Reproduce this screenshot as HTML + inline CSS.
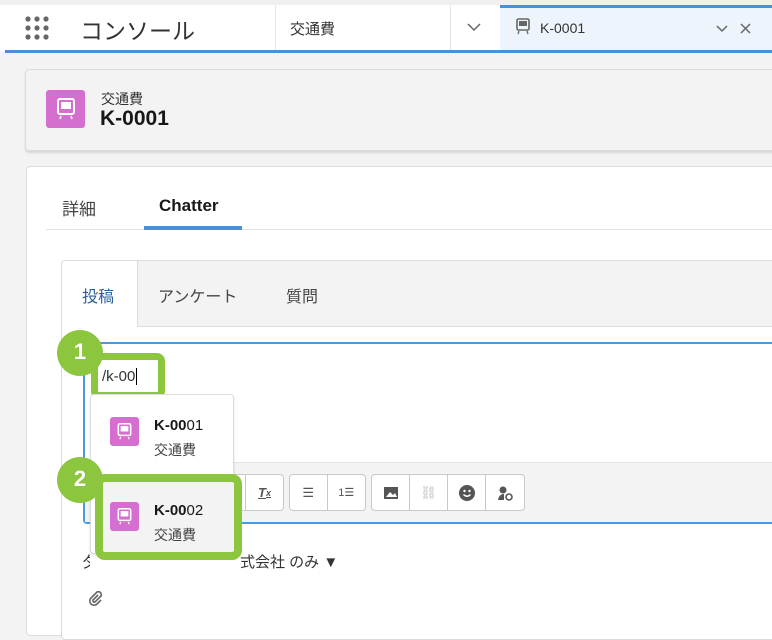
<!DOCTYPE html>
<html><head><meta charset="utf-8"><style>
*{margin:0;padding:0;box-sizing:border-box}
body{width:772px;height:627px;overflow:hidden;background:#f3f3f3;font-family:"Liberation Sans","Noto Sans CJK JP",sans-serif;position:relative;color:#181818}
.a{position:absolute}
.ic{background:#d56fcf;border-radius:3px}
.btn{position:absolute;top:474px;height:37px;border:1px solid #c9c9c9;background:#fff;border-radius:4px;display:flex}
.btn div{width:38px;height:35px;border-right:1px solid #c9c9c9;display:flex;align-items:center;justify-content:center;font-size:13px;color:#555}
.btn div:last-child{border-right:none}
</style></head><body>
<!-- top bar -->
<div class="a" style="left:0;top:0;width:772px;height:52px;background:#fff;border-top:5px solid #f0f0f0"></div>
<div class="a" style="left:500px;top:5px;width:272px;height:46px;background:#eef4fb;border-top:3px solid #4a90d9"></div>
<div class="a" style="left:5px;top:50px;width:767px;height:3px;background:#4a90d9"></div>
<div class="a" style="left:275px;top:5px;width:1px;height:45px;background:#e5e5e5"></div>
<div class="a" style="left:450px;top:5px;width:1px;height:45px;background:#e5e5e5"></div>
<svg class="a" style="left:24px;top:15px" width="26" height="26" viewBox="0 0 26 26" fill="#666"><circle cx="4" cy="4" r="2.6"/><circle cx="13" cy="4" r="2.6"/><circle cx="22" cy="4" r="2.6"/><circle cx="4" cy="13" r="2.6"/><circle cx="13" cy="13" r="2.6"/><circle cx="22" cy="13" r="2.6"/><circle cx="4" cy="22" r="2.6"/><circle cx="13" cy="22" r="2.6"/><circle cx="22" cy="22" r="2.6"/></svg>
<div class="a" style="left:80px;top:12px;font-size:23px;color:#333">コンソール</div>
<div class="a" style="left:290px;top:18px;font-size:15px;color:#333">交通費</div>
<svg class="a" style="left:467px;top:23px" width="14" height="9"><path d="M1 1l6 6 6-6" stroke="#666" stroke-width="1.5" fill="none"/></svg>
<svg class="a" style="left:516px;top:18px" width="14" height="17" viewBox="0 0 14 17"><rect x="1" y="1" width="12" height="11" rx="1.5" fill="none" stroke="#666" stroke-width="1.6"/><rect x="3" y="3" width="8" height="5" fill="#666"/><path d="M3 13l-1 3M11 13l1 3" stroke="#666" stroke-width="1.3"/></svg>
<div class="a" style="left:540px;top:20px;font-size:14px;color:#333">K-0001</div>
<svg class="a" style="left:716px;top:25px" width="12" height="8"><path d="M1 1l5 5 5-5" stroke="#666" stroke-width="1.5" fill="none"/></svg>
<svg class="a" style="left:740px;top:23px" width="11" height="11"><path d="M1 1l9 9M10 1l-9 9" stroke="#666" stroke-width="1.5"/></svg>
<!-- header card -->
<div class="a" style="left:25px;top:69px;width:760px;height:82px;background:#f3f3f3;border:1px solid #dcdcdc;border-radius:4px;box-shadow:0 2px 2px rgba(0,0,0,.12)"></div>
<div class="a ic" style="left:46px;top:90px;width:39px;height:38px"></div>
<svg class="a" style="left:55px;top:97px" width="22" height="24" viewBox="0 0 22 24"><rect x="3" y="2" width="16" height="15" rx="2" fill="none" stroke="#fff" stroke-width="2"/><rect x="6" y="5" width="10" height="7" fill="#fff"/><path d="M6 19l-1 3M16 19l1 3" stroke="#fff" stroke-width="1.6"/></svg>
<div class="a" style="left:101px;top:89px;font-size:14px;color:#333">交通費</div>
<div class="a" style="left:100px;top:107px;font-size:21px;font-weight:bold">K-0001</div>
<!-- main card -->
<div class="a" style="left:26px;top:166px;width:760px;height:470px;background:#fff;border:1px solid #dcdcdc;border-radius:4px"></div>
<div class="a" style="left:62px;top:195px;font-size:17px;color:#444">詳細</div>
<div class="a" style="left:159px;top:196px;font-size:17px;font-weight:bold">Chatter</div>
<div class="a" style="left:46px;top:229px;width:726px;height:1px;background:#e2e2e2"></div>
<div class="a" style="left:144px;top:226px;width:98px;height:4px;background:#4a90d9"></div>
<!-- publisher -->
<div class="a" style="left:61px;top:260px;width:720px;height:380px;background:#fff;border:1px solid #dcdcdc;border-radius:4px"></div>
<div class="a" style="left:137px;top:260px;width:640px;height:67px;background:#f3f3f3;border:1px solid #dcdcdc"></div>
<div class="a" style="left:82px;top:283px;font-size:16px;color:#2a5f9e">投稿</div>
<div class="a" style="left:158px;top:283px;font-size:16px;color:#444">アンケート</div>
<div class="a" style="left:286px;top:283px;font-size:16px;color:#444">質問</div>
<div class="a" style="left:83px;top:342px;width:700px;height:182px;background:#fff;border:2px solid #4a9ae0;border-radius:4px"></div>
<div class="a" style="left:85px;top:462px;width:690px;height:60px;background:#f3f3f3;border-top:1px solid #e2e2e2"></div>
<div class="btn" style="left:208px;width:76px"><div></div><div style="font-style:italic;text-decoration:underline;font-weight:bold">T<sub style="font-size:9px">x</sub></div></div>
<div class="btn" style="left:289px;width:77px"><div>☰</div><div style="font-size:11px">1☰</div></div>
<div class="btn" style="left:371px;width:154px"><div><svg width="14" height="12"><rect width="14" height="12" fill="#555"/><path d="M2 10l4-5 3 3 2-2 2 4z" fill="#fff"/></svg></div><div style="color:#bbb">⛓</div><div><svg width="16" height="16"><circle cx="8" cy="8" r="8" fill="#555"/><circle cx="5.5" cy="6" r="1.2" fill="#fff"/><circle cx="10.5" cy="6" r="1.2" fill="#fff"/><path d="M4.5 9.5q3.5 3.5 7 0" stroke="#fff" stroke-width="1.4" fill="none"/></svg></div><div><svg width="16" height="16"><circle cx="6" cy="5" r="3.5" fill="#555"/><path d="M1 15q1-6 6-6v6z" fill="#555"/><circle cx="12" cy="12" r="3" fill="none" stroke="#555" stroke-width="1.6"/></svg></div></div>
<!-- input highlight -->
<div class="a" style="left:91px;top:353px;width:74px;height:46px;border:7px solid #8cc63f;border-radius:8px;background:#fff"></div>
<div class="a" style="left:102px;top:368px;font-size:15px;color:#333">/k-00<span style="border-left:1px solid #000;margin-left:1px"></span></div>
<!-- dropdown -->
<div class="a" style="left:90px;top:394px;width:144px;height:160px;background:#fff;border:1px solid #dcdcdc;border-radius:4px;box-shadow:0 2px 3px rgba(0,0,0,.1)"></div>
<div class="a ic" style="left:110px;top:417px;width:29px;height:29px"></div>
<svg class="a" style="left:116px;top:422px" width="17" height="19" viewBox="0 0 22 24"><rect x="3" y="2" width="16" height="15" rx="2" fill="none" stroke="#fff" stroke-width="2"/><rect x="6" y="5" width="10" height="7" fill="#fff"/><path d="M6 19l-1 3M16 19l1 3" stroke="#fff" stroke-width="1.6"/></svg>
<div class="a" style="left:154px;top:417px;font-size:15px"><b>K-00</b>01</div>
<div class="a" style="left:154px;top:440px;font-size:14px;color:#444">交通費</div>
<div class="a" style="left:95px;top:474px;width:147px;height:86px;border:8px solid #8cc63f;border-radius:10px;background:#f3f3f3"></div>
<div class="a ic" style="left:110px;top:502px;width:29px;height:29px"></div>
<svg class="a" style="left:116px;top:507px" width="17" height="19" viewBox="0 0 22 24"><rect x="3" y="2" width="16" height="15" rx="2" fill="none" stroke="#fff" stroke-width="2"/><rect x="6" y="5" width="10" height="7" fill="#fff"/><path d="M6 19l-1 3M16 19l1 3" stroke="#fff" stroke-width="1.6"/></svg>
<div class="a" style="left:154px;top:502px;font-size:15px"><b>K-00</b>02</div>
<div class="a" style="left:154px;top:525px;font-size:14px;color:#444">交通費</div>
<!-- circles -->
<div class="a" style="left:57px;top:330px;width:46px;height:46px;border-radius:50%;background:#8cc63f;color:#fff;font-weight:bold;font-size:22px;text-align:center;line-height:44px">1</div>
<div class="a" style="left:57px;top:457px;width:46px;height:46px;border-radius:50%;background:#8cc63f;color:#fff;font-weight:bold;font-size:22px;text-align:center;line-height:44px">2</div>
<!-- below -->
<div class="a" style="left:82px;top:551px;font-size:15px;color:#333;width:8px;overflow:hidden">夕</div>
<div class="a" style="left:240px;top:551px;font-size:15px;color:#333">式会社 のみ ▼</div>
<svg class="a" style="left:88px;top:591px" width="16" height="16" viewBox="0 0 16 16"><path d="M10 4l-5 5a1.5 1.5 0 0 0 2 2l6-6a3 3 0 0 0-4-4L3 7a4 4 0 0 0 6 6l4-4" stroke="#666" stroke-width="1.6" fill="none"/></svg>
</body></html>
